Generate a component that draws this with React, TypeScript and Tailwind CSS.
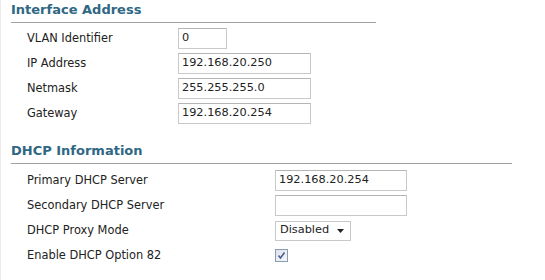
import React from "react";

const font = { fontFamily: '"DejaVu Sans", Verdana, sans-serif' };

function Field({ value, width }: { value: string; width: string }) {
    return (
        <div className={`h-[21px] ${width} border border-[#c9c9c9] border-t-[#b5b5b5] bg-white px-[3px] flex items-center text-[11.3px] text-[#222]`}>
            {value}
        </div>
    );
}

function Header({ title, width }: { title: string; width: string }) {
    return (
        <div className={`h-[23px] ${width} border-b border-[#a0a0a0] flex items-start`}>
            <span className="text-[13px] font-bold leading-[20px] text-[#2f6784]">{title}</span>
        </div>
    );
}

const label = "pl-[16px] text-[11.4px] text-[#222]";

export default function App() {
    return (
        <div style={font} className="h-[280px] w-[545px] bg-white border-l border-[#ececec] pl-[10px] overflow-hidden">
            {/* Interface Address */}
            <Header title="Interface Address" width="w-[365px]" />
            <div className="pt-[5px] grid grid-cols-[167px_auto] gap-y-[4px] items-center">
                <span className={label}>VLAN Identifier</span>
                <Field value="0" width="w-[49px]" />
                <span className={label}>IP Address</span>
                <Field value="192.168.20.250" width="w-[133px]" />
                <span className={label}>Netmask</span>
                <Field value="255.255.255.0" width="w-[133px]" />
                <span className={label}>Gateway</span>
                <Field value="192.168.20.254" width="w-[133px]" />
            </div>

            {/* DHCP Information */}
            <div className="mt-[17px]">
                <Header title="DHCP Information" width="w-[501px]" />
            </div>
            <div className="pt-[6px] grid grid-cols-[264px_auto] gap-y-[4px] items-center">
                <span className={label}>Primary DHCP Server</span>
                <Field value="192.168.20.254" width="w-[132px]" />
                <span className={label}>Secondary DHCP Server</span>
                <Field value="" width="w-[132px]" />
                <span className={label}>DHCP Proxy Mode</span>
                <div className="h-[21px] flex items-center">
                    <div className="h-[20px] w-[76px] border border-[#c9c9c9] bg-white flex items-center justify-between pl-[4px] pr-[6px] text-[11.3px] text-[#222]">
                        <span>Disabled</span>
                        <svg width="7" height="4" viewBox="0 0 7 4">
                            <path d="M0 0 H7 L3.5 4 Z" fill="#222" />
                        </svg>
                    </div>
                </div>
                <span className={label}>Enable DHCP Option 82</span>
                <div className="h-[21px] flex items-center">
                    <div className="h-[13px] w-[13px] border border-[#8b9bb3] bg-gradient-to-br from-[#dfe3ea] to-[#f4f5f8] flex items-center justify-center">
                        <svg width="9" height="9" viewBox="0 0 9 9">
                            <path d="M1.5 4.5 L3.5 7 L7.5 1.5" stroke="#4a5f94" strokeWidth="1.6" fill="none" />
                        </svg>
                    </div>
                </div>
            </div>
        </div>
    );
}
